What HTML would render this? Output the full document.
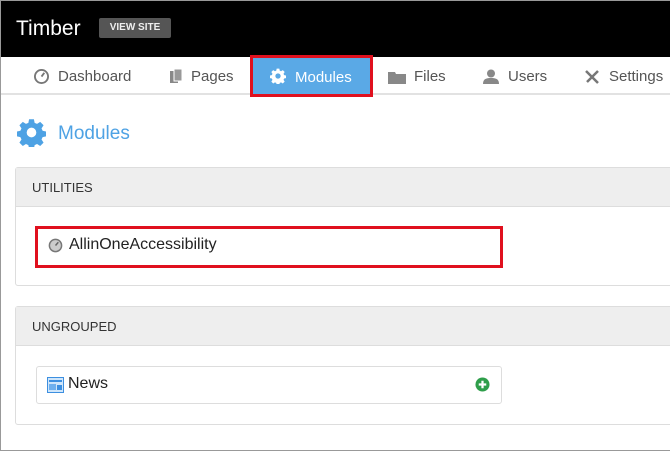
<!DOCTYPE html>
<html><head><meta charset="utf-8"><style>
*{margin:0;padding:0;box-sizing:border-box}
body{width:670px;height:451px;overflow:hidden;background:#fff;font-family:"Liberation Sans",Arial,sans-serif;position:relative}
.frame{position:absolute;left:0;top:0;width:670px;height:451px;border:1px solid #999;border-right:none;pointer-events:none}
.hdr{position:absolute;left:0;top:0;width:670px;height:57px;background:#000}
.logo{position:absolute;left:16px;top:17px;color:#fff;font-size:21px}
.vs{position:absolute;left:99px;top:18px;width:72px;height:20px;background:#555;color:#eee;font-size:10px;font-weight:bold;text-align:center;line-height:20px;border-radius:2px}
.nav{position:absolute;left:0;top:57px;width:670px;height:38px;border-bottom:2px solid #e2e2e2}
.ni{position:absolute;top:0;height:37px;line-height:40px;font-size:15px;color:#555}
.ni svg{position:absolute;top:12px}
.act{position:absolute;left:250px;top:55px;width:123px;height:42px;border:3px solid #e0101e;background:#5aa9e6}
.act span{position:absolute;left:42px;top:11px;color:#fff;font-size:15px}
.h1{position:absolute;left:58px;top:123px;color:#4ea2e4;font-size:19px}
.panel{position:absolute;left:15px;width:660px;border:1px solid #ddd;border-radius:3px}
.ph{height:39px;background:#eee;border-bottom:1px solid #ddd;font-size:13px;color:#333;padding:12px 0 0 16px}
.item{position:absolute;font-size:16px;color:#222}
</style></head><body>
<div class="hdr"><div class="logo">Timber</div><div class="vs">VIEW SITE</div></div>
<div class="nav">
<div class="ni" style="left:34px"><svg style="left:0" width="15" height="15" viewBox="0 0 16 16"><circle cx="8" cy="8" r="7" fill="none" stroke="#777" stroke-width="2"/><path d="M8 8L11 4" stroke="#777" stroke-width="2"/></svg><span style="margin-left:24px">Dashboard</span></div>
<div class="ni" style="left:170px"><svg style="left:0" width="14" height="15" viewBox="0 0 14 15"><rect x="0" y="2" width="8" height="12" fill="#888"/><rect x="4" y="0" width="8" height="12" fill="#999" stroke="#fff"/></svg><span style="margin-left:21px">Pages</span></div>
<div class="ni" style="left:388px"><svg style="left:0;top:14px" width="18" height="13" viewBox="0 0 18 13"><path d="M0 1h7l1 2h10v10H0z" fill="#888"/></svg><span style="margin-left:26px">Files</span></div>
<div class="ni" style="left:483px"><svg style="left:0" width="16" height="15" viewBox="0 0 16 15"><circle cx="8" cy="4.5" r="4" fill="#888"/><path d="M0 15c0-5 3-6 8-6s8 1 8 6z" fill="#888"/></svg><span style="margin-left:25px">Users</span></div>
<div class="ni" style="left:584px"><svg style="left:0" width="16" height="16" viewBox="0 0 16 16"><path d="M2 2l12 12M14 2L3 13" stroke="#777" stroke-width="2.5"/></svg><span style="margin-left:25px">Settings</span></div>
</div>
<div class="act"><svg style="position:absolute;left:17px;top:10px" width="16" height="16" viewBox="0 0 24 24"><path fill="#fff" d="M10 1h4l.6 3 2 .9 2.6-1.7 2.8 2.8-1.7 2.6.9 2 3 .6v4l-3 .6-.9 2 1.7 2.6-2.8 2.8-2.6-1.7-2 .9-.6 3h-4l-.6-3-2-.9-2.6 1.7-2.8-2.8 1.7-2.6-.9-2-3-.6v-4l3-.6.9-2-1.7-2.6 2.8-2.8 2.6 1.7 2-.9zM12 8a4 4 0 100 8 4 4 0 000-8z"/></svg><span>Modules</span></div>
<svg style="position:absolute;left:17px;top:118px" width="29" height="29" viewBox="0 0 24 24"><path fill="#4ea2e4" d="M10 1h4l.6 3 2 .9 2.6-1.7 2.8 2.8-1.7 2.6.9 2 3 .6v4l-3 .6-.9 2 1.7 2.6-2.8 2.8-2.6-1.7-2 .9-.6 3h-4l-.6-3-2-.9-2.6 1.7-2.8-2.8 1.7-2.6-.9-2-3-.6v-4l3-.6.9-2-1.7-2.6 2.8-2.8 2.6 1.7 2-.9zM12 8a4 4 0 100 8 4 4 0 000-8z"/></svg>
<div class="h1">Modules</div>
<div class="panel" style="top:167px;height:119px"><div class="ph">UTILITIES</div></div>
<div style="position:absolute;left:35px;top:226px;width:468px;height:42px;border:3px solid #e0101e;background:#fff"></div>
<svg style="position:absolute;left:48px;top:238px" width="15" height="15" viewBox="0 0 16 16"><circle cx="8" cy="8" r="6.5" fill="#ccc" stroke="#777" stroke-width="1.6"/><path d="M8 8L11 4.5" stroke="#666" stroke-width="1.6"/></svg>
<div class="item" style="left:69px;top:236px">AllinOneAccessibility</div>
<div class="panel" style="top:306px;height:119px"><div class="ph">UNGROUPED</div></div>
<div style="position:absolute;left:36px;top:366px;width:466px;height:38px;border:1px solid #ddd;border-radius:3px;background:#fff"></div>
<svg style="position:absolute;left:47px;top:377px" width="17" height="16" viewBox="0 0 17 16"><rect x="0.5" y="0.5" width="16" height="15" fill="#cfe6fb" stroke="#3d8fe0"/><rect x="2" y="3" width="13" height="2" fill="#3d8fe0"/><rect x="2" y="7" width="7" height="6" fill="#6fb0ee"/><rect x="10" y="8" width="5" height="5" fill="#3d8fe0"/></svg>
<div class="item" style="left:68px;top:375px">News</div>
<svg style="position:absolute;left:475px;top:377px" width="15" height="15" viewBox="0 0 16 16"><circle cx="8" cy="8" r="7.5" fill="#2e9e4a"/><path d="M8 4v8M4 8h8" stroke="#fff" stroke-width="2.4"/></svg>
<div class="frame"></div>
</body></html>
